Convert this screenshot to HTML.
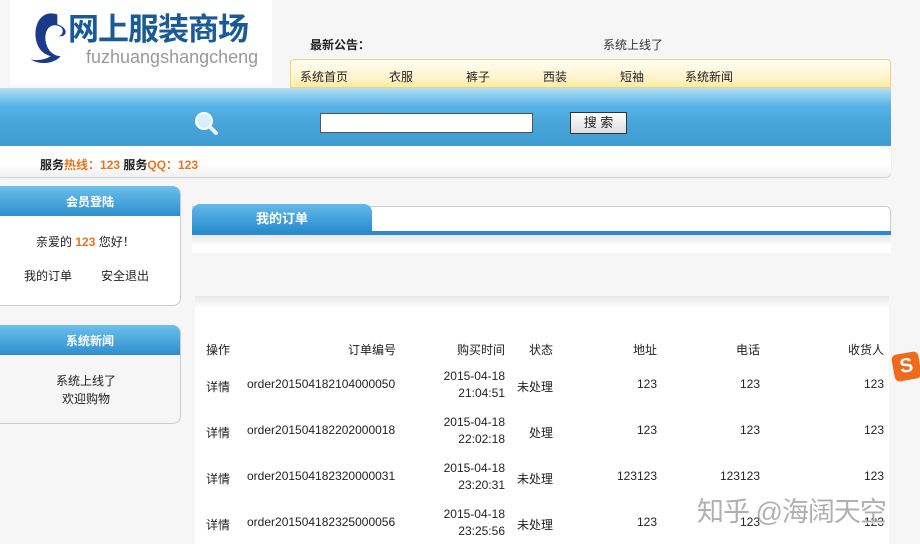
<!DOCTYPE html>
<html><head><meta charset="utf-8"><style>
*{margin:0;padding:0;box-sizing:border-box}
body{width:920px;height:544px;overflow:hidden;background:#f6f6f6;font-family:"Liberation Sans","Noto Sans CJK SC",sans-serif;font-size:12px;color:#222;position:relative}
.a{position:absolute}
.logo{left:10px;top:0;width:262px;height:85px;background:#fff}
.nav{left:290px;top:59px;width:601px;height:29px;border:1px solid #f0d27a;border-radius:4px 4px 0 0;background:linear-gradient(#fffdf2,#fff5d0 60%,#ffe9a6)}
.nav span{position:absolute;top:8px}
.band{left:0;top:88px;width:891px;height:58px;background:linear-gradient(#b5e0f7,#58b4e6 30%,#48a6da 60%,#3f9dd2)}
.hot{left:0;top:146px;width:891px;height:31px;background:linear-gradient(#fff,#fff 60%,#f0f0f0);border-radius:0 0 5px 0;box-shadow:0 1px 1px #ccc}
.box{left:0;width:181px;background:#fff;border:1px solid #ccc;border-left:none;border-radius:0 8px 8px 0}
.bh{height:30px;background:linear-gradient(#6cc0ec,#2e8fce);color:#fff;font-weight:bold;text-align:center;line-height:32px;border-radius:0 8px 0 0;margin-top:-1px}
.t{position:absolute;white-space:nowrap}
.r{text-align:right}
</style></head><body>
<div class="a logo">
<svg width="50" height="70" style="position:absolute;left:14px;top:4px" viewBox="0 0 60 75"><path d="M40 8C22 2 12 18 14 36c2 14 10 20 18 22-6 4-16 6-24 4 12 8 30 4 36-4-8 0-16-6-18-18-2-14 6-22 16-18 6 2 6 10 0 12 10 2 12-10-2-14z" fill="#1c3a8a"/></svg>
<div class="t" style="left:58px;top:4px;font-size:31px;font-weight:bold;color:#1a5a96;letter-spacing:-1px">网上服装商场</div>
<div class="t" style="left:76px;top:47px;font-size:18px;color:#999">fuzhuangshangcheng</div>
</div>
<div class="t" style="left:310px;top:36px;font-weight:bold">最新公告：</div>
<div class="t" style="left:603px;top:36px;color:#333">系统上线了</div>
<div class="a nav"><span style="left:9px">系统首页</span><span style="left:98px">衣服</span><span style="left:175px">裤子</span><span style="left:252px">西装</span><span style="left:329px">短袖</span><span style="left:394px">系统新闻</span></div>
<div class="a band">
<svg width="26" height="26" style="position:absolute;left:193px;top:22px"><circle cx="11" cy="11" r="8" fill="#d8f0fb" stroke="#fff" stroke-width="2"/><line x1="17" y1="17" x2="23" y2="23" stroke="#e8f4fa" stroke-width="4" stroke-linecap="round"/></svg>
<div class="a" style="left:320px;top:25px;width:213px;height:20px;background:#fff;border:1px solid #555"></div>
<div class="a" style="left:570px;top:24px;width:57px;height:22px;background:linear-gradient(#fff,#ddd);border:1px solid #333;text-align:center;line-height:20px;font-size:13px">搜 索</div>
</div>
<div class="a hot"><div class="t" style="left:40px;top:10px;font-weight:bold">服务<span style="color:#e8741f">热线：123</span> 服务<span style="color:#e8741f">QQ：123</span></div></div>

<div class="a box" style="top:186px;height:120px"><div class="bh">会员登陆</div>
<div class="t" style="left:36px;top:46px">亲爱的 <b style="color:#e8741f">123</b> 您好！</div>
<div class="t" style="left:24px;top:80px">我的订单</div><div class="t" style="left:101px;top:80px">安全退出</div></div>
<div class="a box" style="top:325px;height:99px;background:#f6f6f6"><div class="bh">系统新闻</div>
<div class="t" style="left:56px;top:46px;text-align:center;line-height:18px">系统上线了<br>欢迎购物</div></div>

<div class="a" style="left:192px;top:206px;width:699px;height:26px;background:#fff;border:1px solid #ccc;border-radius:0 5px 0 0"></div>
<div class="a" style="left:192px;top:204px;width:180px;height:28px;background:linear-gradient(#62baea,#2a8ccd);border-radius:8px 8px 0 0;color:#fff;font-weight:bold;font-size:13px;text-align:center;line-height:30px">我的订单</div>
<div class="a" style="left:192px;top:231px;width:699px;height:4px;background:#2a8ccd"></div>
<div class="a" style="left:192px;top:235px;width:699px;height:18px;background:linear-gradient(#e6e6e6,#fff 60%)"></div>
<div class="a" style="left:195px;top:296px;width:694px;height:248px;background:linear-gradient(#e8e8e8,#fff 12px)"></div>

<div class="t" style="left:206px;top:341px">操作</div>
<div class="t r" style="right:524px;top:341px">订单编号</div>
<div class="t r" style="right:415px;top:341px">购买时间</div>
<div class="t r" style="right:367px;top:341px">状态</div>
<div class="t r" style="right:263px;top:341px">地址</div>
<div class="t r" style="right:160px;top:341px">电话</div>
<div class="t r" style="right:36px;top:341px">收货人</div>

<div class="t" style="left:206px;top:378px">详情</div><div class="t" style="left:247px;top:377px">order201504182104000050</div><div class="t r" style="right:415px;top:368px;line-height:17px">2015-04-18<br>21:04:51</div><div class="t" style="left:517px;top:378px">未处理</div><div class="t r" style="right:263px;top:377px">123</div><div class="t r" style="right:160px;top:377px">123</div><div class="t r" style="right:36px;top:377px">123</div>
<div class="t" style="left:206px;top:424px">详情</div><div class="t" style="left:247px;top:423px">order201504182202000018</div><div class="t r" style="right:415px;top:414px;line-height:17px">2015-04-18<br>22:02:18</div><div class="t" style="left:529px;top:424px">处理</div><div class="t r" style="right:263px;top:423px">123</div><div class="t r" style="right:160px;top:423px">123</div><div class="t r" style="right:36px;top:423px">123</div>
<div class="t" style="left:206px;top:470px">详情</div><div class="t" style="left:247px;top:469px">order201504182320000031</div><div class="t r" style="right:415px;top:460px;line-height:17px">2015-04-18<br>23:20:31</div><div class="t" style="left:517px;top:470px">未处理</div><div class="t r" style="right:263px;top:469px">123123</div><div class="t r" style="right:160px;top:469px">123123</div><div class="t r" style="right:36px;top:469px">123</div>
<div class="t" style="left:206px;top:516px">详情</div><div class="t" style="left:247px;top:515px">order201504182325000056</div><div class="t r" style="right:415px;top:506px;line-height:17px">2015-04-18<br>23:25:56</div><div class="t" style="left:517px;top:516px">未处理</div><div class="t r" style="right:263px;top:515px">123</div><div class="t r" style="right:160px;top:515px">123</div><div class="t r" style="right:36px;top:515px">123</div>

<div class="t" style="left:697px;top:490px;font-size:27px;letter-spacing:-1px;color:rgba(150,150,150,.75);text-shadow:1px 1px 0 #fff">知乎 @海阔天空</div>
<div class="a" style="left:893px;top:353px;width:27px;height:27px;background:#f06a1c;border-radius:5px;transform:rotate(-10deg);color:#fff;font-weight:bold;font-size:20px;line-height:26px;text-align:center">S</div>
</body></html>
